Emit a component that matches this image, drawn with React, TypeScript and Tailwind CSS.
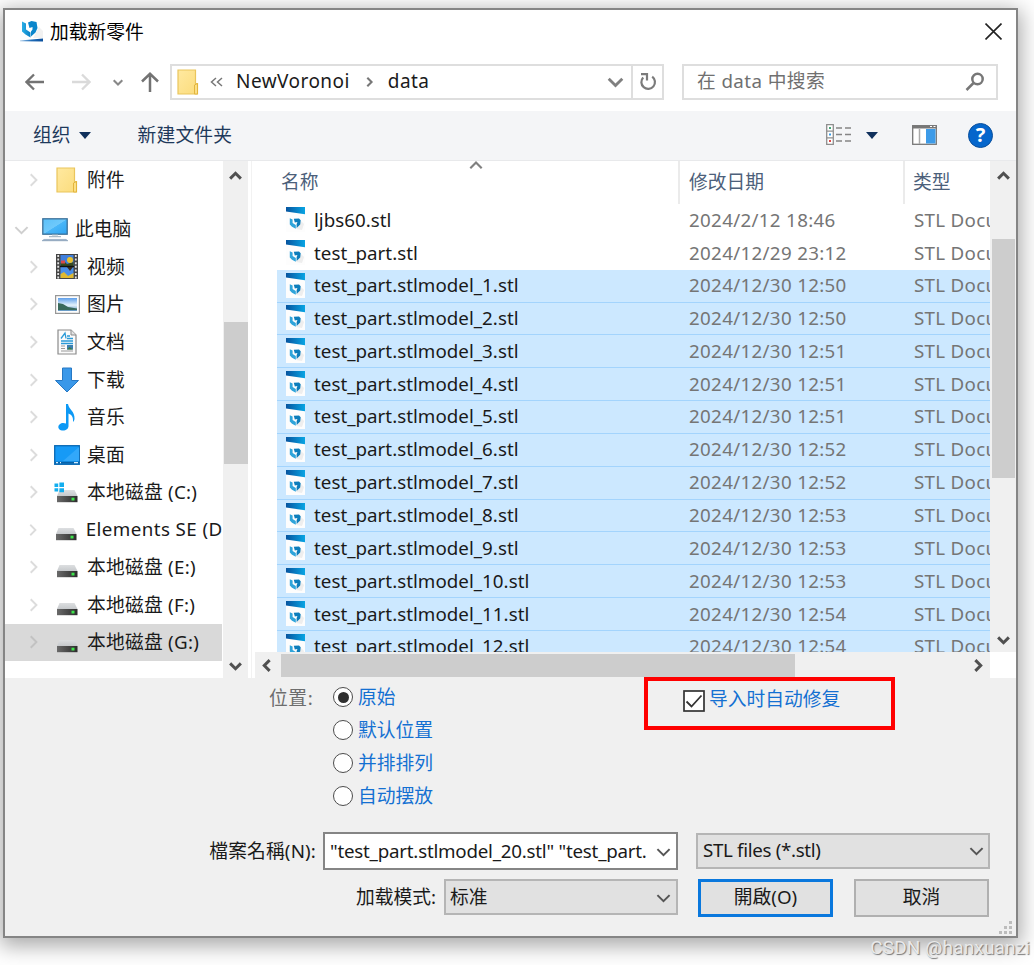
import type { ReactNode } from "react";

const drives = ["本地磁盘 (C:)", "Elements SE (D:)", "本地磁盘 (E:)", "本地磁盘 (F:)", "本地磁盘 (G:)"];

const files: { name: string; date: string; selected: boolean }[] = [
  { name: "ljbs60.stl", date: "2024/2/12 18:46", selected: false },
  { name: "test_part.stl", date: "2024/12/29 23:12", selected: false },
  ...["12:50", "12:50", "12:51", "12:51", "12:51", "12:52", "12:52", "12:53", "12:53", "12:53", "12:54", "12:54"].map(
    (time, i) => ({ name: `test_part.stlmodel_${i + 1}.stl`, date: `2024/12/30 ${time}`, selected: true }),
  ),
];

function Chevron({ dir, className, w = 2 }: { dir: "up" | "down" | "left" | "right"; className: string; w?: number }) {
  const d = {
    up: "M2 9 L7 4 L12 9",
    down: "M2 5 L7 10 L12 5",
    left: "M9 2 L4 7 L9 12",
    right: "M5 2 L10 7 L5 12",
  }[dir];
  return (
    <svg viewBox="0 0 14 14" className={className} fill="none" stroke="currentColor" strokeWidth={w}>
      <path d={d} />
    </svg>
  );
}

function AppLogo() {
  return (
    <svg width="24" height="24" viewBox="0 0 24 24">
      <defs>
        <linearGradient id="logoBar" x1="0" x2="1">
          <stop offset="0" stopColor="#9cc3e6" />
          <stop offset="0.5" stopColor="#1d6cb8" />
          <stop offset="1" stopColor="#0b4f9c" />
        </linearGradient>
        <linearGradient id="logoRibbon" x1="0" x2="1">
          <stop offset="0" stopColor="#29aee6" />
          <stop offset="1" stopColor="#0a7fc4" />
        </linearGradient>
      </defs>
      <path d="M13 18 L19 7 L23 11 V18 Z" fill="#f1f1f1" />
      <path d="M2 1.5 L6 3.5 V9.5 L10.5 12.5 V17.5 L5.5 14.5 L2 11.5 Z" fill="url(#logoRibbon)" />
      <path d="M8 2.5 L11.5 1 L16.5 2 L17.5 8 L15.5 12.5 L11 16.5 V11.5 L12.5 9.5 L12.5 7 L9.5 8 Z" fill="#0a86cc" />
      <path d="M0 20.5 L23 18.5 V21.5 L0 21.2 Z" fill="url(#logoBar)" />
    </svg>
  );
}

function StlIcon() {
  return (
    <svg width="19" height="25" viewBox="0 0 19 25" className="shrink-0">
      <defs>
        <linearGradient id="stlTop" x1="0" x2="1">
          <stop offset="0" stopColor="#07549f" />
          <stop offset="1" stopColor="#08a5e4" />
        </linearGradient>
      </defs>
      <path d="M0 0 H19 V25 H0 Z" fill="#fdfdfd" />
      <path d="M10 22 L15 14 L18 17 L16 23 Z" fill="#eeeeee" />
      <path d="M0 0 H19 V7.2 L0 4.6 Z" fill="url(#stlTop)" />
      <path d="M3.8 11.3 L6.6 12.6 V16 L9.8 18 V21.8 L6 19.8 L3.8 17.6 Z" fill="#2fa4da" />
      <path d="M7.8 11.8 L13 11.4 L14.7 13.2 L14.2 17.5 L10.6 21 V17.2 L11.4 15 L8.8 15.6 Z" fill="#0c7dbb" />
    </svg>
  );
}

function FolderIcon() {
  return (
    <svg width="22" height="26" viewBox="0 0 22 26">
      <defs>
        <linearGradient id="folder" x1="0" x2="1" y2="1">
          <stop offset="0" stopColor="#ffe9a0" />
          <stop offset="1" stopColor="#fbdc7c" />
        </linearGradient>
      </defs>
      <path d="M1 1 H18.5 V14.5 H20.5 V25 H1 Z" fill="url(#folder)" stroke="#eac55c" strokeWidth="1.2" />
      <path d="M17.5 25 V16 L20.5 14.5 V25 Z" fill="#fbdf85" stroke="#e3b53c" />
    </svg>
  );
}

function PcIcon() {
  return (
    <svg width="26" height="24" viewBox="0 0 26 24">
      <defs>
        <linearGradient id="screen" x1="0" x2="1" y2="1">
          <stop offset="0" stopColor="#5bc0f8" />
          <stop offset="0.5" stopColor="#6fc9fb" />
          <stop offset="0.52" stopColor="#49b6f8" />
          <stop offset="1" stopColor="#2fa4f2" />
        </linearGradient>
      </defs>
      <rect x="0.8" y="0.8" width="24.4" height="15.4" fill="url(#screen)" stroke="#3a6f98" strokeWidth="1.3" />
      <path d="M10 17 H16 M7 18.6 H19" stroke="#a9b9c6" strokeWidth="1.2" />
      <path d="M0 22.8 L2 21.4 H24 L26 22.8 Z" fill="#7f9ab5" stroke="#8ba3ba" strokeWidth="0.6" />
    </svg>
  );
}

function VideoIcon() {
  return (
    <svg width="22" height="25" viewBox="0 0 22 25">
      <rect width="22" height="25" fill="#444444" />
      <rect x="4.5" y="1" width="13" height="11" fill="#3f7fdc" />
      <rect x="4.5" y="13" width="13" height="11" fill="#4a8ee8" />
      <path d="M4.5 9 L8 7 L11 10 L17.5 8 V12 H4.5 Z" fill="#394a20" />
      <circle cx="14" cy="6" r="3" fill="#e8c02c" />
      <rect x="5" y="6.5" width="4" height="3" fill="#d94a4a" />
      <path d="M4.5 20 L8 18 L12 22 L17.5 19 V24 H4.5 Z" fill="#e0b92f" />
      <path d="M11 13 H17 L14 17 Z" fill="#3b2c20" />
      <path d="M2.2 1 V25 M19.8 1 V25" stroke="#e4e4e4" strokeWidth="1.8" strokeDasharray="2 1.6" />
      <rect x="4" y="11.8" width="14" height="1.4" fill="#111111" />
    </svg>
  );
}

function PictureIcon() {
  return (
    <svg width="25" height="19" viewBox="0 0 25 19">
      <defs>
        <linearGradient id="sky" y1="0" y2="1" x2="0">
          <stop offset="0" stopColor="#5d9eea" />
          <stop offset="0.55" stopColor="#e4f2fb" />
          <stop offset="1" stopColor="#5f95c2" />
        </linearGradient>
      </defs>
      <rect x="0.6" y="0.6" width="23.8" height="17.8" fill="#fdfdfd" stroke="#979797" strokeWidth="1.2" />
      <rect x="3" y="3" width="19" height="13" fill="url(#sky)" />
      <path d="M3 8 L8 9 L13 12 L22 13.5 V15 H3 Z" fill="#3a6a5b" />
    </svg>
  );
}

function DocumentIcon() {
  return (
    <svg width="20" height="26" viewBox="0 0 20 26">
      <path d="M1 1 H14 L19 6 V25 H1 Z" fill="#fbfbfb" stroke="#8b8b8b" strokeWidth="1.2" />
      <path d="M14 1 V6 H19" fill="#e4e4e4" stroke="#8b8b8b" />
      <path d="M4 9.5 L8 4 L9 9.5 M10 7 H13 M10 9.5 H16 M4 12 H16 M4 14.5 H16" stroke="#2a9ad8" strokeWidth="1.3" fill="none" />
      <path d="M4 17 H8 M4 19.5 H8 M4 22 H16" stroke="#999999" strokeWidth="1.1" />
      <rect x="10" y="16" width="6" height="4.5" fill="#3c7fb0" />
      <path d="M10 20.5 L12.5 18 L16 20.5 Z" fill="#3d7a42" />
    </svg>
  );
}

function DownloadIcon() {
  return (
    <svg width="26" height="26" viewBox="0 0 26 26">
      <path d="M8.5 1 H17.5 V13.5 H24.5 L13 25 L1.5 13.5 H8.5 Z" fill="#3a98e9" stroke="#2678c4" strokeWidth="1" />
    </svg>
  );
}

function MusicIcon() {
  return (
    <svg width="20" height="27" viewBox="0 0 20 27">
      <path d="M9 0 H11 C12 6 18 7 17.5 15 C17.3 16.5 16.5 17.5 16 18 C16.5 12 14 10.5 11.5 9.5 V22 C11.5 25 8.5 27 5 26.5 C1.5 26 0.5 23 2 21 C3.5 18.8 6.5 18.5 9 19.5 Z" fill="#0d99f5" />
    </svg>
  );
}

function DesktopIcon() {
  return (
    <svg width="26" height="20" viewBox="0 0 26 20">
      <rect x="0.7" y="0.7" width="24.6" height="18.6" fill="#169af6" stroke="#0a69b4" strokeWidth="1.3" />
      <path d="M25 2 V16 H9 Z" fill="#32a8fa" />
      <path d="M1 17.7 H25" stroke="#0862a8" strokeWidth="2" />
      <path d="M2 17.7 H4 M6 17.7 H7 M20 17.7 H24" stroke="#d5ecfb" strokeWidth="1.2" />
    </svg>
  );
}

function DriveIcon({ system = false }: { system?: boolean }) {
  return (
    <svg width="26" height="26" viewBox="0 0 26 26">
      <defs>
        <linearGradient id="driveTop" y1="0" y2="1" x2="0">
          <stop offset="0" stopColor="#dddfe1" />
          <stop offset="1" stopColor="#c6c9cc" />
        </linearGradient>
        <linearGradient id="driveFront" x1="0" x2="1">
          <stop offset="0" stopColor="#6a6a6a" />
          <stop offset="1" stopColor="#2c2c2c" />
        </linearGradient>
      </defs>
      <path d="M5.5 11 H20.5 L23.5 17 H3 Z" fill="url(#driveTop)" />
      <rect x="3" y="17" width="20.5" height="6.2" fill="url(#driveFront)" />
      <rect x="17.5" y="18.7" width="3" height="2.8" fill="#3ce44b" />
      {system && <path d="M0.5 4.4 H4.2 V8 H0.5 Z M5.4 3.5 H10 V8 H5.4 Z M0.5 9.2 H4.2 V12.5 H0.5 Z M5.4 9.2 H10 V13.3 H5.4 Z" fill="#12aeef" />}
    </svg>
  );
}

function TreeRow({ icon, label, selected = false }: { icon: ReactNode; label: string; selected?: boolean }) {
  return (
    <div className={`flex h-[37.55px] shrink-0 items-center ${selected ? "bg-[#d9d9d9]" : ""}`}>
      <Chevron dir="right" w={1.7} className={`ml-[20px] h-[16px] w-[16px] ${selected ? "text-[#c2c2c2]" : "text-[#dcdcdc]"}`} />
      <span className="ml-[12px] flex w-[28px] shrink-0 items-center justify-center">{icon}</span>
      <span className={`ml-[6px] overflow-hidden whitespace-pre leading-[28px] ${label.startsWith("E") ? "-mt-px tracking-[0.42px]" : "tracking-[0.25px]"}`}>{label}</span>
    </div>
  );
}

function Radio({ label, checked = false }: { label: string; checked?: boolean }) {
  return (
    <div className="flex h-[32.9px] items-center">
      <span className="ml-[1px] flex size-[20px] items-center justify-center rounded-full border-[1.8px] border-[#4c4c4c] bg-white">
        {checked && <span className="size-[11px] rounded-full bg-[#303030]" />}
      </span>
      <span className="ml-[5px] leading-none text-[#1470d2]">{label}</span>
    </div>
  );
}

export default function App() {
  return (
    <div className="relative h-[965px] w-[1034px] overflow-hidden bg-white pt-2 pl-[3px] font-['Noto_Sans','Noto_Sans_CJK_SC',sans-serif] text-[18.75px] text-[#1a1a1a]">
      <div className="flex h-[930px] w-[1015px] flex-col border-2 border-[#858585] bg-white shadow-[0_5px_20px_3px_rgba(0,0,0,0.34)]">
        <header className="flex h-[44px] shrink-0 items-center pr-[14px] pl-[15px]">
          <AppLogo />
          <h1 className="ml-[6px] leading-none text-black">加载新零件</h1>
          <svg viewBox="0 0 16 16" className="-mt-[2px] ml-auto h-[17px] w-[17px]" stroke="#222" strokeWidth="1.5">
            <path d="M0.5 0.5 L15.5 15.5 M15.5 0.5 L0.5 15.5" />
          </svg>
        </header>

        <nav className="flex h-[57px] shrink-0 items-center pb-[2px]">
          <svg width="20" height="18" viewBox="0 0 20 18" className="mt-[1px] ml-[20px]" fill="none" stroke="#737373" strokeWidth="2.3">
            <path d="M1.5 9 H19 M9 1.5 L1.5 9 L9 16.5" />
          </svg>
          <svg width="20" height="18" viewBox="0 0 20 18" className="mt-[1px] ml-[26px]" fill="none" stroke="#dadada" strokeWidth="2.3">
            <path d="M1 9 H18.5 M11 1.5 L18.5 9 L11 16.5" />
          </svg>
          <Chevron dir="down" w={2.4} className="ml-[21px] size-[12px] text-[#888888]" />
          <svg width="20" height="20" viewBox="0 0 20 20" className="mt-[1px] ml-[16px]" fill="none" stroke="#737373" strokeWidth="2.5">
            <path d="M10 20 V2 M2 9.5 L10 1.8 L18 9.5" />
          </svg>
          <div className="ml-[10px] flex h-[36px] w-[494px] items-center border-2 border-[#dedede]">
            <span className="ml-[5px]"><FolderIcon /></span>
            <svg width="13" height="10" viewBox="0 0 13 10" className="ml-[11px]" fill="none" stroke="#777" strokeWidth="1.5">
              <path d="M6 1 L1.5 5 L6 9 M12 1 L7.5 5 L12 9" />
            </svg>
            <span className="ml-[13px] text-[19px] leading-none tracking-[0.45px]">NewVoronoi</span>
            <Chevron dir="right" w={2.4} className="ml-[13px] size-[12px] text-[#777]" />
            <span className="ml-[13px] text-[19px] leading-none tracking-[0.42px]">data</span>
            <Chevron dir="down" w={2.1} className="ml-auto size-[19px] text-[#808080]" />
            <div className="ml-[6px] flex h-full w-[31px] items-center justify-center border-l-2 border-[#dedede]">
              <svg width="18" height="19" viewBox="0 0 18 19" fill="none" stroke="#7b7b7b" strokeWidth="2.2">
                <path d="M13.2 4.6 A6.8 6.8 0 1 1 4.2 5.4" />
                <path d="M2 2.2 H8 V8.5" />
              </svg>
            </div>
          </div>
          <div className="ml-[18px] flex h-[36px] w-[316px] items-center border-2 border-[#dedede] text-[#707070]">
            <span className="ml-[13px] leading-none tracking-[0.4px]">在 data 中搜索</span>
            <svg width="20" height="20" viewBox="0 0 20 20" className="mr-[11px] ml-auto" fill="none" stroke="#777" strokeWidth="2.5">
              <circle cx="12.5" cy="7" r="5.2" />
              <path d="M8.5 11 L1.5 18" />
            </svg>
          </div>
        </nav>

        <div className="flex h-[50px] shrink-0 items-center border-b border-[#e8e9eb] bg-[#f4f5f7] pb-[1px] text-[#1e395b]">
          <span className="ml-[28px] leading-none">组织</span>
          <svg width="12" height="7" className="ml-[8px]"><path d="M0 0 H12 L6 7 Z" fill="#10305c" /></svg>
          <span className="ml-[47px] leading-none tracking-[0.2px]">新建文件夹</span>
          <svg width="26" height="21" viewBox="0 0 26 21" className="-mt-[1px] ml-auto" fill="none">
            <path d="M0.7 0.7 H7.3 V20.3 H0.7 Z M0.7 7.2 H7.3 M0.7 13.8 H7.3" stroke="#8e8e8e" strokeWidth="1.3" fill="#fff" />
            <path d="M10 4 H16 M19 4 H25 M10 10.5 H16 M19 10.5 H25 M10 17 H16 M19 17 H25" stroke="#858585" strokeWidth="1.5" />
            <path d="M3 4 H5" stroke="#45a678" strokeWidth="2" />
            <path d="M3 10.5 H5" stroke="#3b9de8" strokeWidth="2" />
            <path d="M3 17 H5" stroke="#df4747" strokeWidth="2" />
          </svg>
          <svg width="12" height="7" className="ml-[14px]"><path d="M0 0 H12 L6 7 Z" fill="#10305c" /></svg>
          <svg width="25" height="20" viewBox="0 0 25 20" className="ml-[34px]">
            <rect x="0.7" y="0.7" width="23.6" height="18.6" fill="#fff" stroke="#777" strokeWidth="1.3" />
            <path d="M0 2 H25" stroke="#777" strokeWidth="3" />
            <path d="M7.5 4 V19" stroke="#aaa" strokeWidth="1.5" />
            <rect x="14" y="4" width="9.5" height="14.5" fill="#3d9be8" />
            <path d="M18 1.5 H20 M21.5 1.5 H23.5" stroke="#fff" />
          </svg>
          <span className="mr-[23px] ml-[31px] flex size-[25px] items-center justify-center rounded-full border border-[#0a4f9c] bg-[#0566cc] text-[20px] font-bold leading-none text-white">?</span>
        </div>

        <div className="flex h-[517px] shrink-0">
          <aside className="flex w-[243px] shrink-0">
            <div className="flex w-[217px] flex-col overflow-hidden">
              <TreeRow icon={<FolderIcon />} label="附件" />
              <div className="mt-[12px] flex h-[37.55px] shrink-0 items-center">
                <Chevron dir="down" w={1.6} className="ml-[8px] size-[17px] text-[#cfcfcf]" />
                <span className="mt-[2px] ml-[12px]"><PcIcon /></span>
                <span className="ml-[7px] leading-[28px]">此电脑</span>
              </div>
              <TreeRow icon={<VideoIcon />} label="视频" />
              <TreeRow icon={<PictureIcon />} label="图片" />
              <TreeRow icon={<DocumentIcon />} label="文档" />
              <TreeRow icon={<DownloadIcon />} label="下载" />
              <TreeRow icon={<MusicIcon />} label="音乐" />
              <TreeRow icon={<DesktopIcon />} label="桌面" />
              {drives.map((label, i) => (
                <TreeRow key={label} icon={<DriveIcon system={i === 0} />} label={label} selected={i === 4} />
              ))}
            </div>
            <div className="ml-[1px] flex w-[25px] flex-col items-center bg-[#f0f0f0]">
              <Chevron dir="up" w={2.8} className="mt-[8px] size-[15px] text-[#505050]" />
              <div className="mt-[138px] h-[142px] w-[24px] bg-[#cdcdcd]" />
              <Chevron dir="down" w={2.8} className="mt-auto mb-[5px] size-[15px] text-[#505050]" />
            </div>
          </aside>

          <main className="ml-[3px] flex min-w-0 flex-1 flex-col border-l border-[#f2f2f2]">
            <div className="flex h-[491px]">
              <div className="flex w-[738px] flex-col overflow-hidden pl-[25px]">
                <div className="flex h-[43px] shrink-0 text-[#4c607a]">
                  <div className="relative flex w-[403px] items-center border-r-2 border-[#ebebeb] pl-[4px]">
                    名称
                    <Chevron dir="up" w={1.9} className="absolute -top-[3px] left-[191px] size-[16px] text-[#808080]" />
                  </div>
                  <div className="flex w-[225px] items-center border-r-2 border-[#ebebeb] pl-[9px]">修改日期</div>
                  <div className="flex items-center pl-[8px]">类型</div>
                </div>
                {files.map((file) => (
                  <div
                    key={file.name}
                    className={`flex h-[32.85px] shrink-0 items-center whitespace-pre pb-[1px] leading-[26px] ${file.selected ? "border-b border-[#a3d4fd] bg-[#cce8ff]" : ""}`}
                  >
                    <span className="ml-[8.5px]"><StlIcon /></span>
                    <span className="ml-[9.5px] w-[375px] shrink-0 tracking-[0.02px]">{file.name}</span>
                    <span className="w-[225px] shrink-0 tracking-[0.32px] text-[#757575]">{file.date}</span>
                    <span className="tracking-[0.28px] text-[#757575]">STL Document</span>
                  </div>
                ))}
              </div>
              <div className="flex flex-1 flex-col items-center bg-[#f0f0f0]">
                <Chevron dir="up" w={2.8} className="mt-[8px] size-[15px] text-[#505050]" />
                <div className="mt-[55px] ml-[1px] h-[239px] w-[23px] bg-[#cdcdcd]" />
                <Chevron dir="down" w={2.8} className="mt-auto mb-[5px] size-[15px] text-[#505050]" />
              </div>
            </div>
            <div className="flex h-[26px] pl-[3px]">
              <div className="flex w-[735px] items-center bg-[#f0f0f0]">
                <Chevron dir="left" w={2.8} className="ml-[5px] size-[15px] text-[#505050]" />
                <div className="ml-[6px] h-[23px] w-[514px] bg-[#cdcdcd]" />
                <Chevron dir="right" w={2.8} className="mr-[5px] ml-auto size-[15px] text-[#505050]" />
              </div>
            </div>
          </main>
        </div>

        <footer className="relative min-h-0 flex-1 bg-[#f0f0f0]">
          <div className="flex h-[154px] pt-[3px]">
            <span className="mt-[8px] ml-[264px] w-[63px] leading-none tracking-[0.6px] text-[#6d6d6d]">位置:</span>
            <div className="w-[351px]">
              <Radio label="原始" checked />
              <Radio label="默认位置" />
              <Radio label="并排排列" />
              <Radio label="自动摆放" />
            </div>
            <div className="mt-[7px] flex h-[24px] items-center">
              <svg width="22" height="22" viewBox="0 0 22 22" className="mt-[2px]" fill="#fff" stroke="#333">
                <rect x="1" y="1" width="20" height="20" strokeWidth="1.7" />
                <path d="M3.5 11.5 L8.5 16.5 L18.5 5.5" fill="none" strokeWidth="1.8" />
              </svg>
              <span className="-mt-[2px] ml-[4px] leading-none text-[#1470d2]">导入时自动修复</span>
            </div>
          </div>
          <div className="flex h-[38px] items-center">
            <span className="w-[311px] text-right font-['Noto_Sans','Noto_Sans_CJK_TC',sans-serif] leading-none tracking-[0.15px]">檔案名稱(N):</span>
            <div className="ml-[7px] flex h-[38px] w-[355px] items-center border-2 border-[#858585] bg-white">
              <span className="ml-[5px] w-[320px] overflow-hidden whitespace-pre leading-[28px] tracking-[-0.23px]">"test_part.stlmodel_20.stl" "test_part.</span>
              <Chevron dir="down" w={1.6} className="ml-[5px] size-[17px] shrink-0 text-[#555]" />
            </div>
            <div className="mb-[1px] ml-[18px] flex h-[36px] w-[294px] items-center border-2 border-[#b5b5b5] bg-[#e1e1e1]">
              <span className="ml-[5px] leading-none tracking-[-0.33px]">STL files (*.stl)</span>
              <Chevron dir="down" w={1.6} className="mr-[3px] ml-auto size-[17px] text-[#555]" />
            </div>
          </div>
          <div className="mt-[9px] flex h-[38px] items-start">
            <span className="mt-[9px] w-[431px] text-right leading-none">加载模式:</span>
            <div className="ml-[8px] flex h-[36px] w-[234px] items-center border-2 border-[#b5b5b5] bg-[#e1e1e1]">
              <span className="ml-[4px] leading-none">标准</span>
              <Chevron dir="down" w={1.6} className="mr-[4px] ml-auto size-[17px] text-[#555]" />
            </div>
            <button className="ml-[20px] h-[38px] w-[135px] border-[3px] border-[#0a78dd] bg-[#e1e1e1] pb-[2px] font-['Noto_Sans','Noto_Sans_CJK_TC',sans-serif] leading-none">開啟(O)</button>
            <button className="ml-[21px] h-[38px] w-[135px] border-2 border-[#b0b0b0] bg-[#e1e1e1] pb-[2px] font-['Noto_Sans','Noto_Sans_CJK_TC',sans-serif] leading-none">取消</button>
          </div>
          <svg width="13" height="13" viewBox="0 0 13 13" className="absolute right-[4px] bottom-[2px]" fill="#bcbcbc">
            <path d="M10 0h3v3h-3z M5 5h3v3h-3z M10 5h3v3h-3z M0 10h3v3h-3z M5 10h3v3h-3z M10 10h3v3h-3z" />
          </svg>
          <div className="absolute -top-[1px] left-[639px] h-[53px] w-[251px] border-4 border-[#ff0000]" />
        </footer>
      </div>
      <div className="absolute right-[4px] bottom-[8px] whitespace-nowrap font-[Roboto,sans-serif] text-[19px] leading-none tracking-[0.15px] text-[#e9e9e9] [text-shadow:1px_1px_1px_#777]">CSDN @hanxuanzi</div>
    </div>
  );
}
